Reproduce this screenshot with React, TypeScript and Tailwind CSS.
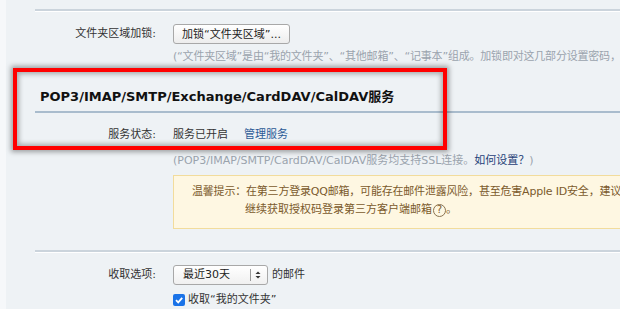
const font = "font-['DejaVu_Sans','Noto_Sans_CJK_SC',sans-serif]";

function Separator() {
  return (
    <div>
      <div className="h-[2px] bg-[#cbd4dc]" />
      <div className="h-px bg-white" />
    </div>
  );
}

function Row({ label, children }: { label: string; children: React.ReactNode }) {
  return (
    <div className="flex items-center h-5">
      <div className="w-[121px] text-right text-[#333] shrink-0">{label}</div>
      <div className="ml-[17px] flex items-center">{children}</div>
    </div>
  );
}

export default function App() {
  return (
    <div className={`relative w-[620px] h-[309px] overflow-hidden bg-[#eef2f5] flex text-[11px] ${font}`}>
      <div className="w-[6px] bg-[#f6f8fa] shrink-0" />
      <div className="flex-1 pl-[29px] flex flex-col">
        <div className="h-[9px]" />
        <Separator />

        <div className="mt-[12px]">
          <Row label="文件夹区域加锁:">
            <button className="h-5 w-[117px] rounded-[3px] border border-[#a8a8a8] bg-gradient-to-b from-white to-[#ededed] text-[#222] leading-none">
              加锁“文件夹区域”...
            </button>
          </Row>
        </div>
        <div className="mt-[5px] ml-[138px] h-4 leading-4 text-[#9aa3ad] whitespace-nowrap tracking-[-0.2px]">
          (“文件夹区域”是由“我的文件夹”、“其他邮箱”、“记事本”组成。加锁即对这几部分设置密码，以便保护
        </div>

        <div className="mt-[22px] pl-[5px] h-5 leading-5 text-[13px] font-bold text-[#111] whitespace-nowrap">
          POP3/IMAP/SMTP/Exchange/CardDAV/CalDAV服务
        </div>
        <div className="mt-[4px] h-[2px] bg-[#a9bccd]" />

        <div className="mt-[12px]">
          <Row label="服务状态:">
            <span className="text-[#333]">服务已开启</span>
            <a className="ml-[16px] text-[#2b5a96]">管理服务</a>
          </Row>
        </div>
        <div className="mt-[8px] ml-[138px] h-4 leading-4 text-[#9aa3ad] whitespace-nowrap">
          (POP3/IMAP/SMTP/CardDAV/CalDAV服务均支持SSL连接。<span className="text-[#1f3f78]">如何设置？</span>)
        </div>

        <div className="mt-[6px] ml-[138px] -mr-[40px] h-[54px] border border-[#f2dc9c] bg-[#fef7e2] pt-[7px] text-[#7b5a2c] whitespace-nowrap">
          <div className="h-[18px] leading-[18px] pl-[18px] tracking-[-0.2px]">
            温馨提示：在第三方登录QQ邮箱，可能存在邮件泄露风险，甚至危害Apple ID安全，建议使用QQ邮箱
          </div>
          <div className="h-[18px] leading-[18px] pl-[71px] flex items-center">
            继续获取授权码登录第三方客户端邮箱
            <span className="ml-px inline-flex items-center justify-center w-[13px] h-[13px] rounded-full border border-[#8a7350] text-[10px] leading-none">?</span>
            。
          </div>
        </div>

        <div className="mt-[21px]">
          <Separator />
        </div>

        <div className="mt-[12px]">
          <Row label="收取选项:">
            <div className="h-5 w-[95px] rounded-[3px] border border-[#a8a8a8] bg-gradient-to-b from-white to-[#f0f0f0] flex items-center text-[#222]">
              <span className="pl-[9px] flex-1">最近30天</span>
              <span className="h-3 w-px bg-[#999]" />
              <svg width="14" height="12" viewBox="0 0 14 12" className="mr-[2px]">
                <path d="M4.5 5 L7 2.5 L9.5 5 Z" fill="#333" />
                <path d="M4.5 7 L7 9.5 L9.5 7 Z" fill="#333" />
              </svg>
            </div>
            <span className="ml-[4px] text-[#333]">的邮件</span>
          </Row>
        </div>
        <div className="mt-[7px] ml-[138px] h-4 flex items-center text-[#333] whitespace-nowrap">
          <span className="w-[12px] h-[12px] rounded-[2px] bg-[#1a73e8] flex items-center justify-center">
            <svg width="10" height="10" viewBox="0 0 10 10">
              <path d="M2 5.2 L4.2 7.4 L8.2 2.8" stroke="white" strokeWidth="1.8" fill="none" />
            </svg>
          </span>
          <span className="ml-[3px]">收取“我的文件夹”</span>
        </div>
      </div>

      <div className="absolute left-[13px] top-[68px] w-[434px] h-[82px] border-4 border-[#f00] shadow-[0_0_5px_2px_rgba(0,0,0,0.35),inset_0_0_5px_2px_rgba(0,0,0,0.3)] pointer-events-none" />
    </div>
  );
}
